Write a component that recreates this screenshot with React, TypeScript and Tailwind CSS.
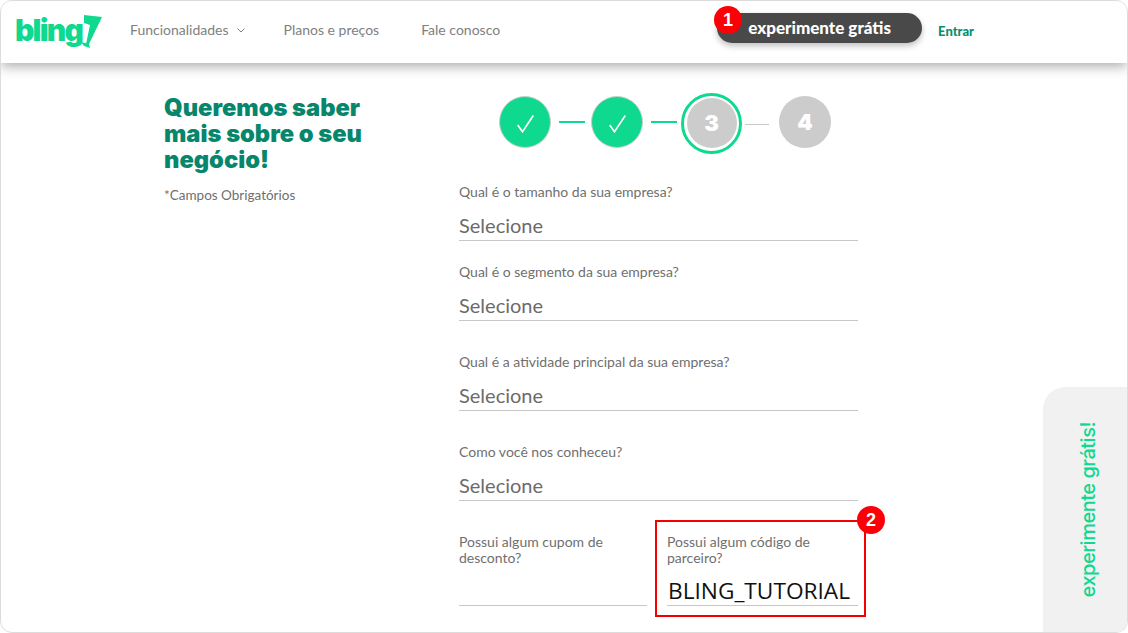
const fieldLabel = "text-[14px] leading-[16px] text-[#6f6f6f]";

function Badge({ n, className }: { n: string; className: string }) {
  return (
    <span className={`absolute z-20 flex size-[28px] items-center justify-center rounded-full bg-[#fb0007] font-['Liberation_Sans',sans-serif] text-[18px] font-bold text-white ${className}`}>
      {n}
    </span>
  );
}

function Check() {
  return (
    <svg width="17" height="18" viewBox="0 0 17 18" fill="none" stroke="#ffffff" strokeWidth="1.6" className="mt-[4px]">
      <path d="M0.7 10 L5.5 16.8 L16.3 0.5" />
    </svg>
  );
}

function DoneStep() {
  return (
    <div className="flex size-[52px] shrink-0 items-center justify-center rounded-full border border-[#c9cfcb] bg-[#0fd88f]">
      <Check />
    </div>
  );
}

function SelectField({ label, className }: { label: string; className: string }) {
  return (
    <div className={className}>
      <p className={fieldLabel}>{label}</p>
      <div className="mt-[13px] border-b border-[#c8c8c8] pb-[2px] text-[20px] leading-[25px] text-[#6b6b6b]">Selecione</div>
    </div>
  );
}

export default function App() {
  return (
    <div className="relative h-[633px] w-[1128px] overflow-hidden rounded-[12px] border border-[#dcdcdc] bg-white font-['Lato',sans-serif]">
      <header className="relative z-10 flex h-[62px] items-center bg-white pl-[14px] shadow-[0_3px_12px_rgba(0,0,0,0.35)]">
        <div className="mb-[2px] flex w-[115px] items-start">
          <span className="font-['Inter',sans-serif] text-[30px] font-black leading-[30px] tracking-[-1.8px] text-[#0fd88f]">bling</span>
          <svg width="22" height="34" viewBox="0 0 22 34" className="mt-[-1px] ml-[-1px]">
            <path d="M3 1 L21 3 L8 30 L5 30 L9 11 L3 9 Z" fill="#0fd88f" />
            <path d="M0 28 L8 30 L9 34 L3 32 Z" fill="#0fd88f" />
          </svg>
        </div>
        <nav className="mb-[6px] flex items-center text-[14px] text-[#808080]">
          <span>Funcionalidades</span>
          <svg width="8" height="5" viewBox="0 0 8 5" fill="none" stroke="#808080" className="ml-[8px] mt-[3px]">
            <path d="M0.5 0.5 L4 4 L7.5 0.5" />
          </svg>
          <span className="ml-[39px]">Planos e preços</span>
          <span className="ml-[42px]">Fale conosco</span>
        </nav>
        <div className="relative mb-[8px] ml-auto mr-[153px] flex items-center">
          <span className="flex h-[30px] w-[205px] items-center justify-center rounded-full bg-[#494949] text-[17px] font-black text-white shadow-[0_3px_6px_rgba(0,0,0,0.25)]">
            experimente grátis
          </span>
          <Badge n="1" className="left-[-3px] top-[-7px]" />
          <span className="ml-[16px] mt-[7px] text-[13px] font-black text-[#06906f]">Entrar</span>
        </div>
      </header>

      <main className="flex pl-[163px]">
        <section className="w-[295px] pt-[32px]">
          <h1 className="w-[220px] font-['Inter',sans-serif] text-[23.7px] font-black leading-[26px] text-[#06866c]">
            Queremos saber mais sobre o seu negócio!
          </h1>
          <p className="mt-[15px] text-[13.5px] leading-[15px] text-[#6f6f6f]">*Campos Obrigatórios</p>
        </section>

        <section className="w-[399px]">
          <div className="ml-[40px] mt-[33px] flex h-[52px] items-center">
            <DoneStep />
            <div className="ml-[8px] mr-[6px] h-[2px] w-[26px] bg-[#0fd88f]" />
            <DoneStep />
            <div className="ml-[8px] mr-[4px] h-[2px] w-[26px] bg-[#0fd88f]" />
            <div className="flex size-[61px] shrink-0 translate-y-[1px] items-center justify-center rounded-full border-[3px] border-[#0fd88f] bg-white">
              <div className="flex size-[50px] items-center justify-center rounded-full bg-[#cccccc] font-['Inter',sans-serif] text-[22px] font-black text-white">3</div>
            </div>
            <div className="ml-[3px] mr-[10px] h-px w-[24px] translate-y-[2px] bg-[#c8c8c8]" />
            <div className="flex size-[52px] shrink-0 items-center justify-center rounded-full bg-[#cccccc] font-['Inter',sans-serif] text-[22px] font-black text-white">4</div>
          </div>

          <SelectField label="Qual é o tamanho da sua empresa?" className="mt-[36px]" />
          <SelectField label="Qual é o segmento da sua empresa?" className="mt-[23px]" />
          <SelectField label="Qual é a atividade principal da sua empresa?" className="mt-[33px]" />
          <SelectField label="Como você nos conheceu?" className="mt-[33px]" />

          <div className="mt-[33px] grid grid-cols-[188px_191px] gap-x-[20px]">
            <div>
              <p className={`${fieldLabel} w-[170px]`}>Possui algum cupom de desconto?</p>
              <div className="mt-[11px] h-[29px] border-b border-[#c8c8c8]" />
            </div>
            <div className="relative">
              <p className={fieldLabel}>Possui algum código de parceiro?</p>
              <div className="mt-[11px] h-[29px] border-b border-[#c8c8c8] pl-[1px] font-['Open_Sans',sans-serif] text-[22.7px] leading-[28px] text-[#111111]">BLING_TUTORIAL</div>
              <div className="absolute left-[-12px] top-[-14px] h-[97px] w-[211px] border-2 border-[#f40000]" />
              <Badge n="2" className="right-[-27px] top-[-28px]" />
            </div>
          </div>
        </section>
      </main>

      <aside className="absolute bottom-[-1px] right-[-1px] flex h-[246px] w-[85px] items-center justify-center rounded-tl-[22px] bg-[#f1f1f1] pl-[4px]">
        <span className="rotate-180 font-['Inter',sans-serif] text-[20px] font-medium tracking-[-0.5px] text-[#0fd88f] [writing-mode:vertical-rl]">experimente grátis!</span>
      </aside>
    </div>
  );
}
